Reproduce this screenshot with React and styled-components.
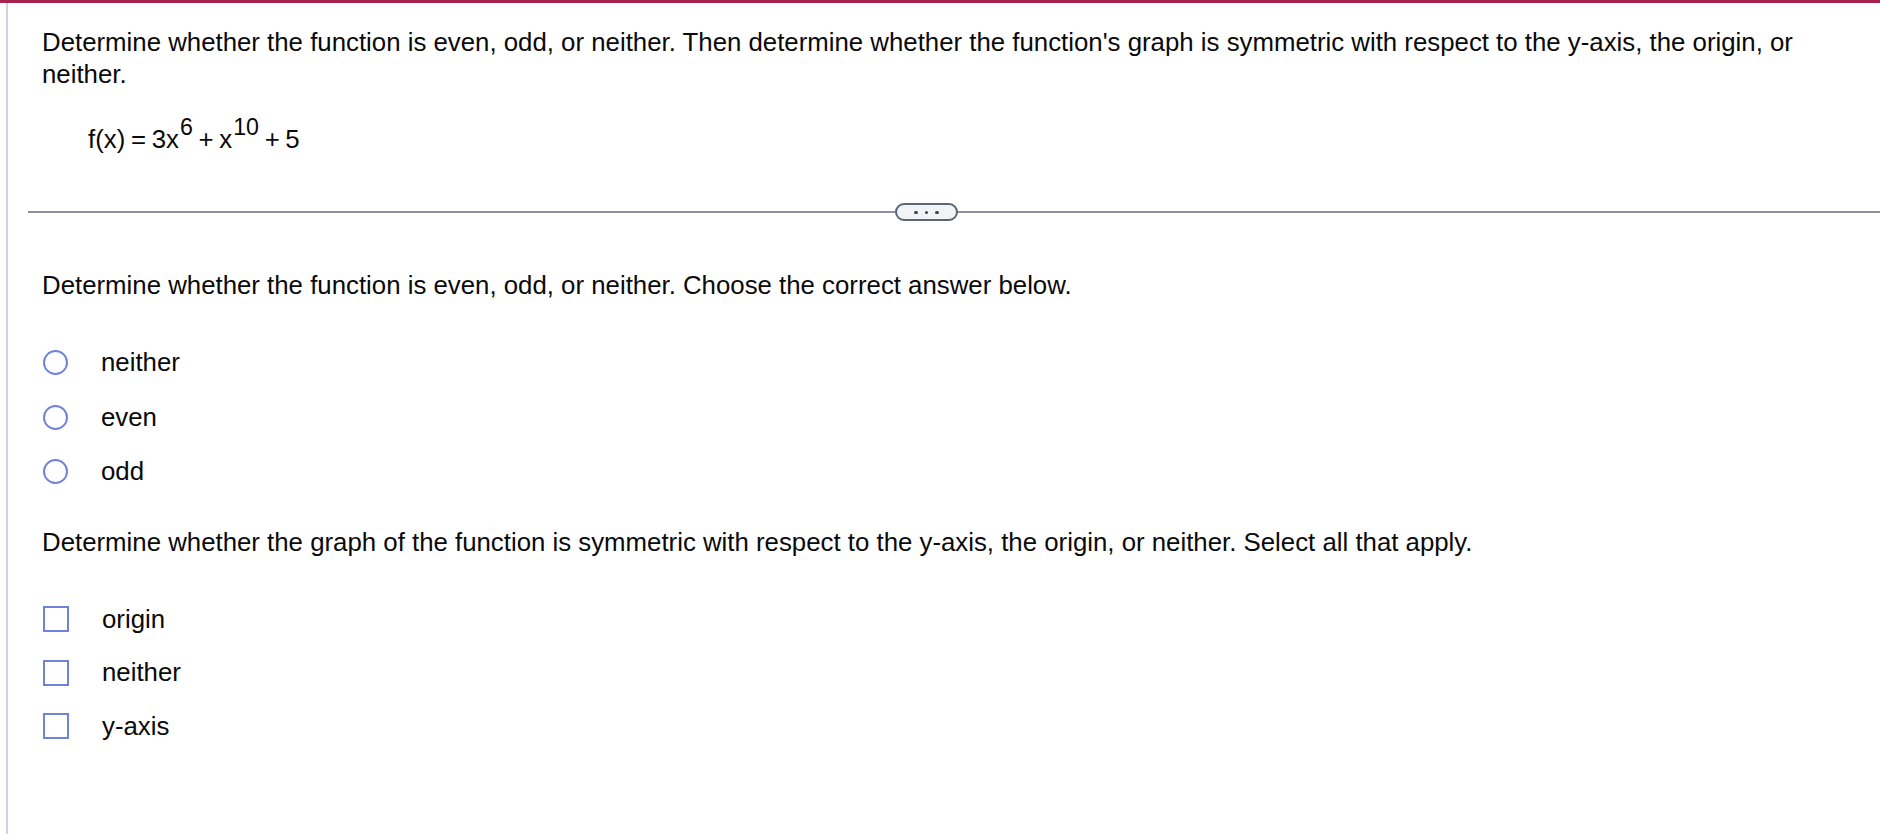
import React from 'react'
import styled, { createGlobalStyle } from 'styled-components'

const GlobalStyle = createGlobalStyle`
    body {
        margin: 0;
        background: #ffffff;
        font-family: "Liberation Sans", Arial, sans-serif;
        color: #0a0a0a;
    }
`

const Styled = {
    Page: styled.div`
        box-sizing: border-box;
        min-height: 100vh;
        border-top: 3px solid #a6234f;
        padding-left: 6px;
        display: flex;
    `,
    Frame: styled.div`
        flex: 1;
        border-left: 2px solid #cfd3e3;
        padding-top: 22.6px;
    `,
    Text: styled.p`
        margin: 0;
        padding: 0 34px;
        font-size: 25.8px;
        line-height: 32.4px;
    `,
    Formula: styled.div`
        margin-top: 32.6px;
        padding-left: 80px;
        font-size: 25.8px;
        line-height: 32.4px;
        white-space: pre;
        word-spacing: -1.5px;
    `,
    Sup: styled.span`
        display: inline-block;
        line-height: 0;
        position: relative;
        top: -13px;
        margin-left: 1px;
        font-size: 0.9em;
    `,
    Divider: styled.div`
        display: flex;
        align-items: center;
        margin: 48px 0 48px 20px;
        height: 18px;
    `,
    Rule: styled.div`
        height: 2px;
        background: #8a909d;
        flex: ${p => (p.$fixed ? `0 0 ${p.$fixed}px` : '1')};
    `,
    Pill: styled.button`
        box-sizing: border-box;
        width: 63px;
        height: 18px;
        padding: 0;
        border: 2px solid #5b6573;
        border-radius: 9px;
        background: #f1f3f6;
        display: flex;
        align-items: center;
        justify-content: center;
        gap: 6.7px;
    `,
    Dot: styled.span`
        width: 3.6px;
        height: 3.6px;
        border-radius: 50%;
        background: #3f4650;
    `,
    Options: styled.div`
        display: flex;
        flex-direction: column;
        padding-left: 35px;
        margin-top: ${p => p.$top}px;
        margin-bottom: ${p => p.$bottom || 0}px;
    `,
    Row: styled.label`
        display: flex;
        align-items: center;
        height: ${p => p.$h}px;
        font-size: 25.8px;
        gap: 33px;
    `,
    Radio: styled.span`
        box-sizing: border-box;
        width: 25px;
        height: 25px;
        border-radius: 50%;
        border: 2.8px solid #7083d9;
        background: #ffffff;
        flex: none;
    `,
    Check: styled.span`
        box-sizing: border-box;
        width: 26px;
        height: 26px;
        border: 2.8px solid #7083d9;
        background: #ffffff;
        flex: none;
    `,
}

const radios = ['neither', 'even', 'odd']
const checks = ['origin', 'neither', 'y-axis']

const App = () => {
    return (
        <>
            <GlobalStyle />
            <Styled.Page>
                <Styled.Frame>
                    <Styled.Text>
                        Determine whether the function is even, odd, or neither. Then determine whether the function's graph is symmetric with respect to the y-axis, the origin, or neither.
                    </Styled.Text>
                    <Styled.Formula>
                        {'f(x) = 3x'}<Styled.Sup>6</Styled.Sup>{' + x'}<Styled.Sup>10</Styled.Sup>{' + 5'}
                    </Styled.Formula>
                    <Styled.Divider>
                        <Styled.Rule $fixed={867} />
                        <Styled.Pill aria-label="more">
                            <Styled.Dot />
                            <Styled.Dot />
                            <Styled.Dot />
                        </Styled.Pill>
                        <Styled.Rule />
                    </Styled.Divider>
                    <Styled.Text>
                        Determine whether the function is even, odd, or neither. Choose the correct answer below.
                    </Styled.Text>
                    <Styled.Options $top={33.5} $bottom={26.8}>
                        {radios.map(r => (
                            <Styled.Row key={r} $h={54.5}>
                                <Styled.Radio />
                                {r}
                            </Styled.Row>
                        ))}
                    </Styled.Options>
                    <Styled.Text>
                        Determine whether the graph of the function is symmetric with respect to the y-axis, the origin, or neither. Select all that apply.
                    </Styled.Text>
                    <Styled.Options $top={34.5}>
                        {checks.map(c => (
                            <Styled.Row key={c} $h={53.5}>
                                <Styled.Check />
                                {c}
                            </Styled.Row>
                        ))}
                    </Styled.Options>
                </Styled.Frame>
            </Styled.Page>
        </>
    )
}

export default App
